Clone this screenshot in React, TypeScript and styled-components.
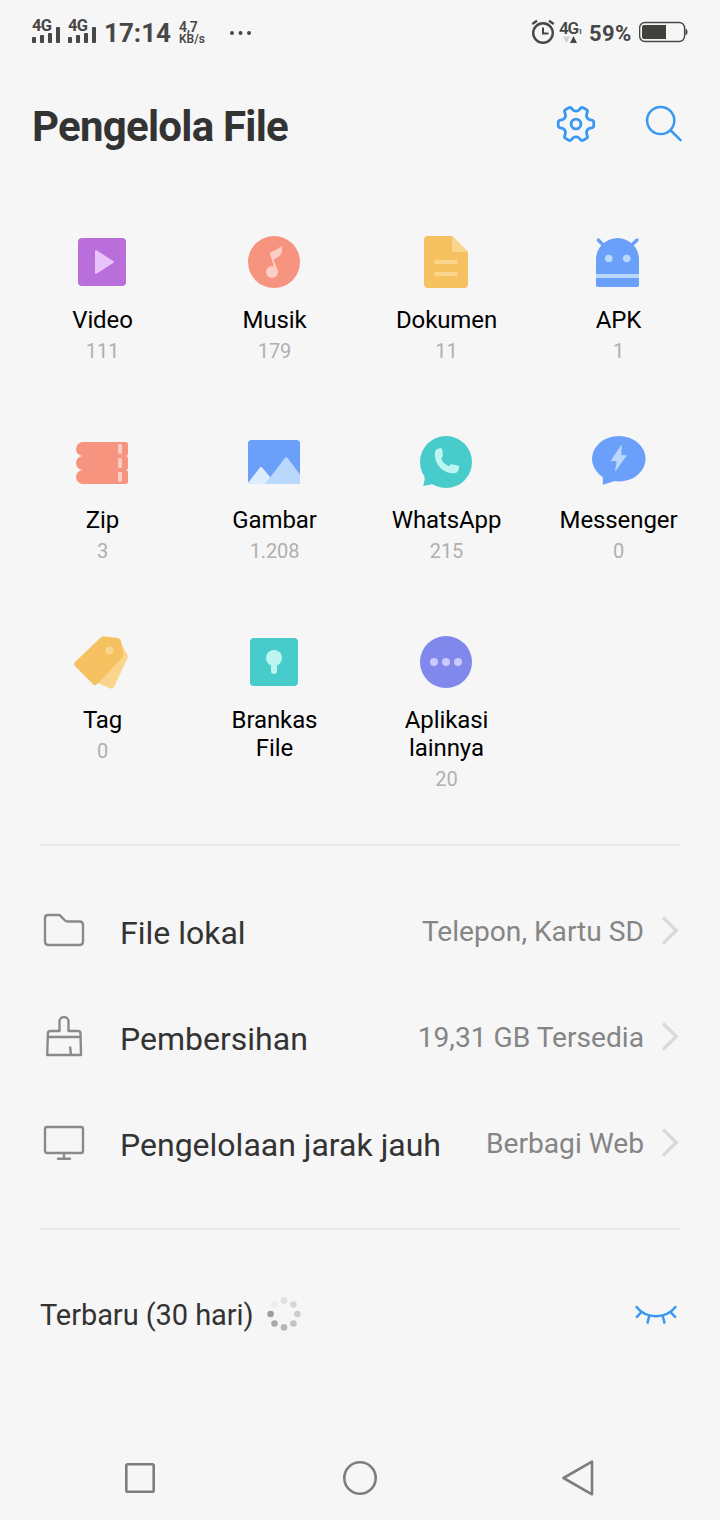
import React from "react";
import styled, { createGlobalStyle } from "styled-components";

const GlobalStyle = createGlobalStyle`
  *, *::before, *::after { box-sizing: border-box; }
  html, body { margin: 0; padding: 0; background: #f6f6f6; }
  body {
    font-family: Roboto, "Liberation Sans", sans-serif;
    color: #333;
    -webkit-font-smoothing: antialiased;
  }
  svg { display: block; flex: none; }
`;

const Screen = styled.div`
  width: 720px;
  height: 1520px;
  display: flex;
  flex-direction: column;
  background: #f6f6f6;
  overflow: hidden;
`;

/* ---------- status bar ---------- */

const StatusBar = styled.div`
  height: 64px;
  flex: none;
  display: flex;
  justify-content: space-between;
  padding: 0 32px;
  color: #474747;
  font-weight: 700;
  white-space: nowrap;
`;

const StatusGroup = styled.div`
  display: flex;
  align-items: flex-start;
`;

const Signal = styled.div`
  display: grid;
  width: 28px;
  height: 26px;
  margin: 17px 8px 0 0;
  & > * { grid-area: 1 / 1; }
  & > svg { align-self: end; }
`;

const Network = styled.span`
  font-size: 16.5px;
  line-height: 17px;
  letter-spacing: -0.7px;
`;

const Clock = styled.span`
  margin-top: 18px;
  font-size: 26px;
  line-height: 30px;
  width: 75px;
`;

const Speed = styled.span`
  display: flex;
  flex-direction: column;
  margin-top: 21px;
  width: 50px;
  line-height: 12px;
  font-size: 12px;
  font-weight: 600;
`;

const SpeedValue = styled.span`
  font-size: 14px;
  letter-spacing: -0.3px;
`;

const MobileData = styled.div`
  display: flex;
  flex-direction: column;
  width: 29px;
  margin: 19px 0 0 5px;
  font-size: 17px;
  line-height: 18px;
  font-weight: 600;
  letter-spacing: -1.2px;
`;

const Generation = styled.span`
  height: 17px;
  display: flex;
  align-items: baseline;
  margin-left: -1px;
`;

const SimIndex = styled.span`
  font-size: 8px;
`;

const BatteryLevel = styled.span`
  width: 50px;
  margin-top: 20px;
  font-size: 22px;
  line-height: 28px;
  letter-spacing: 0.4px;
`;

/* ---------- header ---------- */

const Header = styled.header`
  height: 128px;
  flex: none;
  display: flex;
  align-items: flex-start;
  justify-content: space-between;
  padding: 36px 32px 0;
`;

const Title = styled.h1`
  margin: 0;
  font-size: 42px;
  line-height: 54px;
  letter-spacing: -0.75px;
  font-weight: 700;
  color: #333;
`;

const HeaderActions = styled.div`
  display: flex;
  gap: 40px;
`;

/* ---------- category grid ---------- */

const Categories = styled.main`
  display: grid;
  grid-template-columns: repeat(4, 172px);
  grid-auto-rows: 200px;
  padding: 40px 16px 0;
  height: 652px;
  flex: none;
`;

const Category = styled.div`
  display: flex;
  flex-direction: column;
  align-items: center;
`;

const CategoryName = styled.span`
  margin-top: 14px;
  padding-left: 1px;
  max-width: 124px;
  font-size: 24px;
  line-height: 28px;
  letter-spacing: -0.1px;
  color: #000;
  text-align: center;
`;

const CategoryCount = styled.span`
  margin-top: 5px;
  padding-left: 1px;
  font-size: 20px;
  line-height: 24px;
  letter-spacing: -0.1px;
  color: #b0b0b0;
`;

/* ---------- storage list ---------- */

const Divider = styled.hr`
  width: 640px;
  height: 2px;
  margin: 0 40px;
  border: 0;
  flex: none;
  background: #e8e8e8;
`;

const StorageList = styled.section`
  height: 382px;
  flex: none;
  padding: 32px 40px;
`;

const StorageRow = styled.div`
  height: 106px;
  display: flex;
  align-items: center;
`;

const StorageName = styled.span`
  flex: 1;
  padding: 3px 0 0 32px;
  font-size: 32px;
  line-height: 40px;
  color: #333;
  white-space: nowrap;
`;

const StorageInfo = styled.span`
  margin-right: 16px;
  padding-top: 2px;
  font-size: 28.15px;
  line-height: 36px;
  color: #858585;
  white-space: nowrap;
`;

/* ---------- recent + navigation ---------- */

const Recent = styled.section`
  height: 168px;
  flex: none;
  display: flex;
  align-items: center;
  padding: 0 40px;
`;

const RecentTitle = styled.h2`
  margin: 0 12px 0 0;
  padding-top: 2px;
  font-size: 29px;
  line-height: 36px;
  letter-spacing: -0.06px;
  font-weight: 400;
  color: #333;
`;

const Spacer = styled.div`
  flex: 1;
`;

const NavBar = styled.nav`
  margin-top: auto;
  height: 84px;
  flex: none;
  display: flex;
  justify-content: space-between;
  align-items: center;
  padding: 0 120px;
`;

/* ---------- drawings ---------- */

const SignalBars = () => (
  <svg width="28" height="16" fill="#474747">
    <rect x="0" y="10" width="4" height="6" rx="1" />
    <rect x="8" y="8" width="4" height="8" rx="1" />
    <rect x="16" y="6" width="4" height="10" rx="1" />
    <rect x="24" y="0" width="4" height="16" rx="1" />
  </svg>
);

const MoreDots = () => (
  <svg width="24" height="64" fill="#474747">
    <circle cx="3" cy="33" r="2" />
    <circle cx="11.5" cy="33" r="2" />
    <circle cx="20" cy="33" r="2" />
  </svg>
);

const AlarmIcon = () => (
  <svg width="24" height="64" fill="none" stroke="#474747" strokeWidth="2.4">
    <circle cx="12" cy="33" r="9.8" />
    <path d="M12 27.5V33.5H17.5" strokeWidth="2" />
    <path d="M1.3 24L6 20.8M22.7 24L18 20.8" />
  </svg>
);

const DataArrows = () => (
  <svg width="20" height="8">
    <path d="M3 0.5H10L6.5 7Z" fill="#cfcfcf" />
    <path d="M10 7H17L13.5 0Z" fill="#474747" />
  </svg>
);

const BatteryIcon = () => (
  <svg width="49" height="64">
    <rect x="0.6" y="22.5" width="45" height="19" rx="5.5" fill="none" stroke="#474747" strokeWidth="1.4" />
    <path d="M5 25H27V39H5Q3 39 3 37V27Q3 25 5 25Z" fill="#40423d" />
    <path d="M46.5 28.5Q48.6 29 48.6 32Q48.6 35 46.5 35.5Z" fill="#474747" />
  </svg>
);

const gearPath = (() => {
  const points: [number, number][] = [];
  for (let i = 0; i < 6; i++) {
    for (const [offset, radius] of [[-20.5, 13], [-11.5, 18.1], [11.5, 18.1], [20.5, 13]]) {
      const angle = ((i * 60 + offset) * Math.PI) / 180;
      points.push([24 + radius * Math.cos(angle), 24 + radius * Math.sin(angle)]);
    }
  }
  const toward = (a: number[], b: number[], distance: number) => {
    const length = Math.hypot(b[0] - a[0], b[1] - a[1]);
    return `${(a[0] + ((b[0] - a[0]) * distance) / length).toFixed(2)} ${(a[1] + ((b[1] - a[1]) * distance) / length).toFixed(2)}`;
  };
  return (
    points
      .map((p, i) => {
        const before = points[(i + points.length - 1) % points.length];
        const after = points[(i + 1) % points.length];
        return `${i ? "L" : "M"}${toward(p, before, 2)}Q${p[0].toFixed(2)} ${p[1].toFixed(2)} ${toward(p, after, 2)}`;
      })
      .join("") + "Z"
  );
})();

const GearIcon = () => (
  <svg width="48" height="48" fill="none" stroke="#3a97f2" strokeWidth="2.8">
    <path d={gearPath} />
    <circle cx="24" cy="24" r="4.9" />
  </svg>
);

const SearchIcon = () => (
  <svg width="48" height="48" fill="none" stroke="#3a97f2" strokeWidth="2.5" strokeLinecap="round">
    <circle cx="20.7" cy="20.5" r="13.6" />
    <path d="M30.7 30.5L40.6 40.2" />
  </svg>
);

const art: Record<string, React.ReactNode> = {
  video: (
    <>
      <rect x="6" y="6" width="48" height="48" rx="4" fill="#ba6edb" />
      <path d="M24 19.2V40.8L41 30Z" fill="#e7c3fa" stroke="#e7c3fa" strokeWidth="2" strokeLinejoin="round" />
    </>
  ),
  music: (
    <>
      <circle cx="30" cy="30" r="26" fill="#f79480" />
      <g fill="#fbcec4">
        <circle cx="28" cy="40" r="6" />
        <path d="M31.4 39L26.1 22.6Q25.6 20.7 27.4 19.9Q33.5 17.6 36.5 14.7Q38 13.8 38 15.4V19.3Q37.7 24 29.7 27.4L33.9 39.5Z" />
      </g>
    </>
  ),
  document: (
    <>
      <path d="M12 4H36L52 20V52Q52 56 48 56H12Q8 56 8 52V8Q8 4 12 4Z" fill="#f6c161" />
      <path d="M36 4L52 20H39Q36 20 36 17Z" fill="#fad68c" />
      <path d="M20 30H40M20 42H40" stroke="#fad68c" strokeWidth="4" strokeLinecap="round" />
    </>
  ),
  apk: (
    <>
      <path d="M10.3 8L15 12.7M49 8L44 12.7" stroke="#6a9ffa" strokeWidth="3.4" strokeLinecap="round" />
      <path d="M8 27.5A21.5 21.5 0 0 1 51 27.5V53Q51 55 49 55H10Q8 55 8 53Z" fill="#6a9ffa" />
      <path d="M8 42H51V46H8Z" fill="#bad8fc" />
      <circle cx="20.8" cy="26.5" r="3.8" fill="#bad8fc" />
      <circle cx="38.7" cy="26.5" r="3.8" fill="#bad8fc" />
    </>
  ),
  zip: (
    <>
      {[10, 24, 38].map((y) => (
        <g key={y}>
          <path d={`M11 ${y}H53.5Q56 ${y} 56 ${y + 2.5}V${y + 11.5}Q56 ${y + 14} 53.5 ${y + 14}H11A7 7 0 0 1 11 ${y}Z`} fill="#f79480" />
          <rect x="46" y={y + 2} width="4" height="10" rx="1.4" fill="#fbcec4" />
        </g>
      ))}
    </>
  ),
  picture: (
    <>
      <rect x="4" y="8" width="52" height="44" rx="3.5" fill="#6a9ffa" />
      <path d="M4.3 50.5L15.7 35.8Q17 34.2 18.3 35.8L27 46L22 52H7.5Q5 52 4.3 50.5Z" fill="#dceefb" />
      <path d="M21 52L40.6 26.4Q42.3 24.3 44 26.4L56 42.5V48.5Q56 52 52.5 52Z" fill="#bad8fc" />
    </>
  ),
  whatsapp: (
    <>
      <circle cx="30" cy="30" r="26" fill="#48cccb" />
      <path d="M6 40L8.5 43Q9.3 48 7.3 54L17.5 52L26 48Z" fill="#48cccb" />
      <path d="M19 19.5Q20 16.8 24.5 16Q25.9 16 26.2 17.5L27 23.8Q27 24.8 25.6 25.5Q24.9 30.8 33 34.2Q34 32.5 35.2 32.3L42 33.6Q43.5 34 43.2 35.5Q42 40.5 39.5 41Q31.5 42.3 24.7 36.2Q17.8 29.5 19 19.5Z" fill="#bdf5f0" />
    </>
  ),
  messenger: (
    <>
      <ellipse cx="30.8" cy="26.8" rx="26.8" ry="22.8" fill="#6a9ffa" />
      <path d="M9 38L14.8 43.7V52.8L27 49L30 40Z" fill="#6a9ffa" />
      <path d="M33.3 13.3L23 28.7L29 29L27.3 39L38.5 23.5L33 23.2Z" fill="#bad8fc" stroke="#bad8fc" strokeWidth=".6" strokeLinejoin="round" />
    </>
  ),
  tag: (
    <>
      <path d="M49 11L55.5 23Q56.3 24.6 55.6 26L42 55Q41 57.3 38.7 56.5L25.5 51Z" fill="#fad68c" />
      <path d="M32 4.2L45.5 6Q48 6.3 48.8 8.3L51.3 21.5Q51.7 24.3 50 26L25 52.3Q23 54.2 21 52.3L3 34Q1 32 3 30L28.5 5.8Q30 4 32 4.2Z" fill="#f6c161" />
      <circle cx="37.5" cy="18.4" r="4" fill="#fad68c" />
    </>
  ),
  vault: (
    <>
      <rect x="6" y="6" width="48" height="48" rx="4" fill="#48cccb" />
      <circle cx="30" cy="26" r="8" fill="#bdf5f0" />
      <path d="M30 30V39" stroke="#bdf5f0" strokeWidth="6" strokeLinecap="round" />
    </>
  ),
  apps: (
    <>
      <circle cx="30" cy="30" r="26" fill="#8188eb" />
      {[18, 30, 42].map((x) => (
        <circle key={x} cx={x} cy="30" r="4" fill="#cac9fa" />
      ))}
    </>
  ),
};

const storageArt: Record<string, React.ReactNode> = {
  folder: <path d="M8 8H18.7Q19.5 8 20.2 8.7L25 13.5Q26 14.5 27.3 14.5H39.5Q43 14.5 43 18V34.5Q43 38 39.5 38H8.5Q5 38 5 34.5V11Q5 8 8 8Z" />,
  brush: (
    <>
      <path d="M10.5 18H19.5V8.5A4.5 4.5 0 0 1 28.5 8.5V18H38Q40.3 18 40.5 20.3L41 42H7.2L7.9 20.3Q8 18 10.5 18Z" />
      <path d="M8 24H40.5M30 33.5L31 42" />
    </>
  ),
  monitor: (
    <>
      <rect x="5" y="8" width="38" height="26" rx="2" />
      <path d="M24 34V39.5M18 39.7H30" strokeLinecap="round" />
    </>
  ),
};

const Chevron = () => (
  <svg width="20" height="32" fill="none" stroke="#d9d9d9" strokeWidth="3.4">
    <path d="M3 2.4L16.2 15.5L3 28.6" />
  </svg>
);

const Spinner = () => (
  <svg width="36" height="36">
    {["#cdcdcd", "#c3c3c3", "#b7b7b7", "#a9a9a9", "#9d9d9d", "#ececec", "#e0e0e0", "#d6d6d6"].map((fill, i) => {
      const angle = (i * Math.PI) / 4;
      return <circle key={fill} cx={18 + 13.4 * Math.cos(angle)} cy={18 + 13.4 * Math.sin(angle)} r="3.3" fill={fill} />;
    })}
  </svg>
);

const ClosedEyeIcon = () => (
  <svg width="48" height="32" fill="none" stroke="#3a97f2" strokeWidth="2.5" strokeLinecap="round">
    <path d="M4.5 9Q12 18.2 24 18.2Q36 18.2 43.5 9" />
    <path d="M9.5 14L4.9 18.8M38.5 14L43.1 18.8M17.2 18L15.6 24.6M30.8 18L32.4 24.6" />
  </svg>
);

/* ---------- data ---------- */

const categories = [
  { icon: "video", name: "Video", count: "111" },
  { icon: "music", name: "Musik", count: "179" },
  { icon: "document", name: "Dokumen", count: "11" },
  { icon: "apk", name: "APK", count: "1" },
  { icon: "zip", name: "Zip", count: "3" },
  { icon: "picture", name: "Gambar", count: "1.208" },
  { icon: "whatsapp", name: "WhatsApp", count: "215" },
  { icon: "messenger", name: "Messenger", count: "0" },
  { icon: "tag", name: "Tag", count: "0" },
  { icon: "vault", name: "Brankas File", count: "" },
  { icon: "apps", name: "Aplikasi lainnya", count: "20" },
];

const storage = [
  { icon: "folder", name: "File lokal", info: "Telepon, Kartu SD" },
  { icon: "brush", name: "Pembersihan", info: "19,31 GB Tersedia" },
  { icon: "monitor", name: "Pengelolaan jarak jauh", info: "Berbagi Web" },
];

export default function App() {
  return (
    <>
      <GlobalStyle />
      <Screen>
        <StatusBar>
          <StatusGroup>
            <Signal><SignalBars /><Network>4G</Network></Signal>
            <Signal><SignalBars /><Network>4G</Network></Signal>
            <Clock>17:14</Clock>
            <Speed><SpeedValue>4,7</SpeedValue><span>KB/s</span></Speed>
            <MoreDots />
          </StatusGroup>
          <StatusGroup>
            <AlarmIcon />
            <MobileData>
              <Generation>4G<SimIndex>1</SimIndex></Generation>
              <DataArrows />
            </MobileData>
            <BatteryLevel>59%</BatteryLevel>
            <BatteryIcon />
          </StatusGroup>
        </StatusBar>

        <Header>
          <Title>Pengelola File</Title>
          <HeaderActions>
            <GearIcon />
            <SearchIcon />
          </HeaderActions>
        </Header>

        <Categories>
          {categories.map(({ icon, name, count }) => (
            <Category key={name}>
              <svg width="60" height="60">{art[icon]}</svg>
              <CategoryName>{name}</CategoryName>
              {count && <CategoryCount>{count}</CategoryCount>}
            </Category>
          ))}
        </Categories>

        <Divider />
        <StorageList>
          {storage.map(({ icon, name, info }) => (
            <StorageRow key={name}>
              <svg width="48" height="48" fill="none" stroke="#8a8a8a" strokeWidth="2.4" strokeLinejoin="round">
                {storageArt[icon]}
              </svg>
              <StorageName>{name}</StorageName>
              <StorageInfo>{info}</StorageInfo>
              <Chevron />
            </StorageRow>
          ))}
        </StorageList>
        <Divider />

        <Recent>
          <RecentTitle>Terbaru (30 hari)</RecentTitle>
          <Spinner />
          <Spacer />
          <ClosedEyeIcon />
        </Recent>

        <NavBar>
          <svg width="40" height="40" fill="none" stroke="#7d7d7d" strokeWidth="2.6">
            <rect x="6.3" y="6.3" width="27.4" height="27.4" rx="1.5" />
          </svg>
          <svg width="40" height="40" fill="none" stroke="#7d7d7d" strokeWidth="2.6">
            <circle cx="20" cy="20" r="15.7" />
          </svg>
          <svg width="40" height="40" fill="none" stroke="#7d7d7d" strokeWidth="2.6" strokeLinejoin="round">
            <path d="M3.5 20L32 3.7V36.3Z" />
          </svg>
        </NavBar>
      </Screen>
    </>
  );
}
